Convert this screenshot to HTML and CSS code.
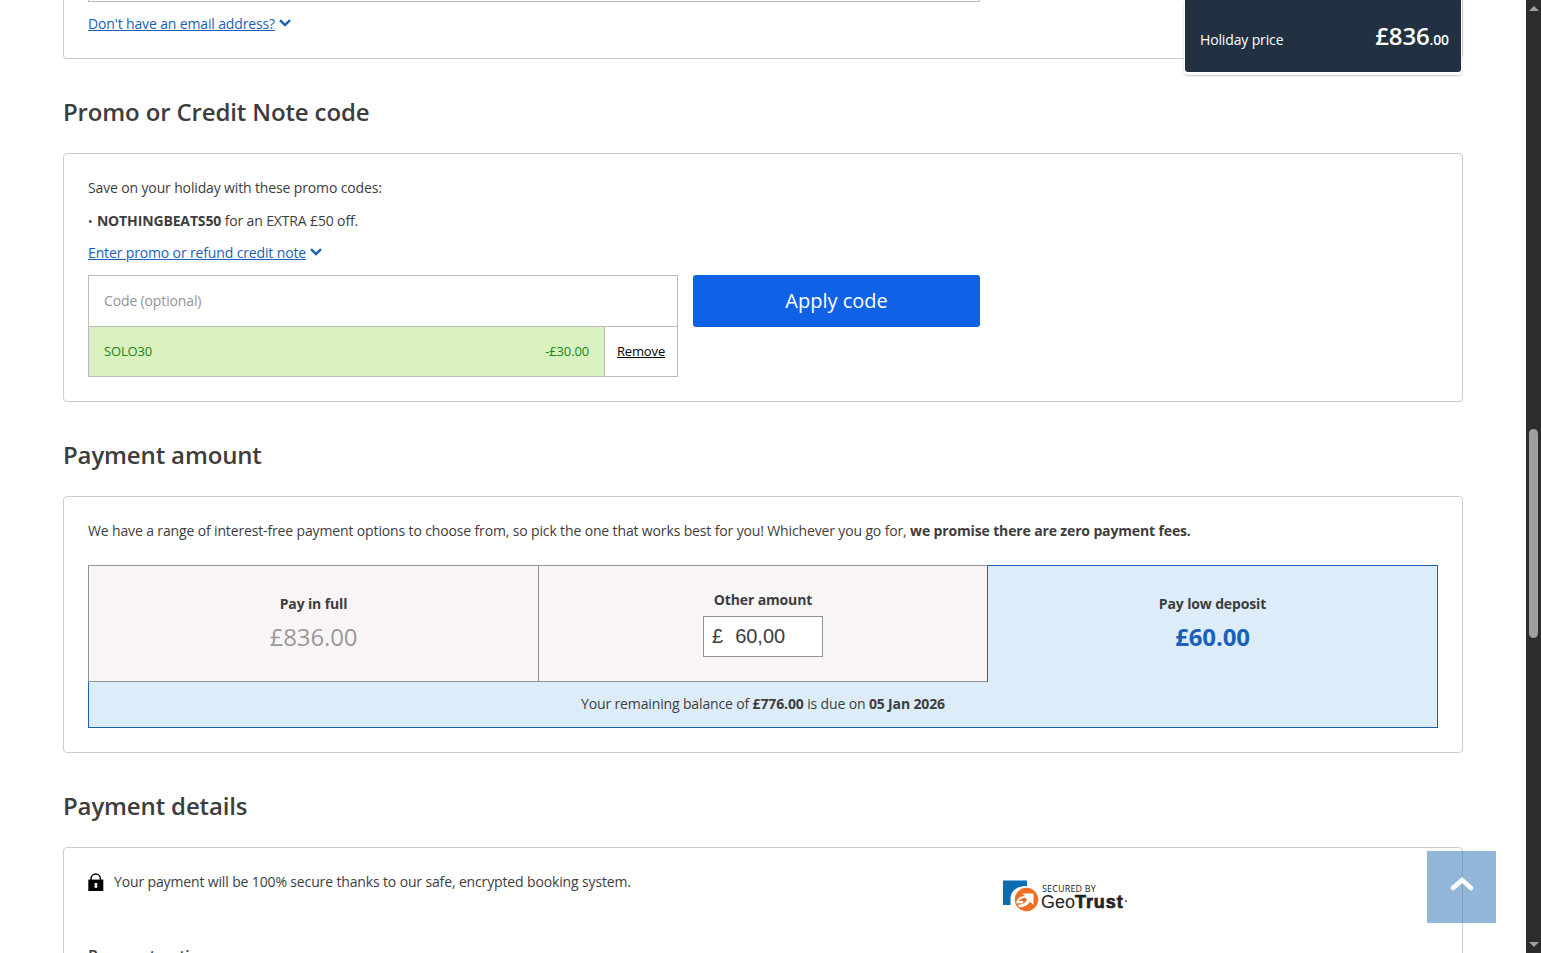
FILE: index.html
```html
<!DOCTYPE html>
<html lang="en">
<head>
  <meta charset="UTF-8">
  <meta name="viewport" content="width=device-width, initial-scale=1.0">
  <title>Payment</title>
  <link rel="stylesheet" href="styles.css">
</head>
<body>

<main class="page">
  <section class="panel panel-contact">
    <div class="email-field"></div>
    <a class="toggle-link" href="#"><span>Don't have an email address?</span><svg class="chevron" width="12" height="8" viewBox="0 0 12 8"><path d="M1 1.2 L6 6 L11 1.2"/></svg></a>
  </section>

  <h2>Promo or Credit Note code</h2>
  <section class="panel">
    <p class="promo-intro">Save on your holiday with these promo codes:</p>
    <p class="promo-item"><span class="dot">•</span> <b>NOTHINGBEATS50</b> for an EXTRA £50 off.</p>
    <a class="toggle-link" href="#"><span>Enter promo or refund credit note</span><svg class="chevron" width="12" height="8" viewBox="0 0 12 8"><path d="M1 1.2 L6 6 L11 1.2"/></svg></a>
    <div class="promo-form">
      <div class="promo-codes">
        <input class="code-input" type="text" placeholder="Code (optional)">
        <div class="applied">
          <div class="applied-code"><span>SOLO30</span><span>-£30.00</span></div>
          <a class="remove" href="#">Remove</a>
        </div>
      </div>
      <button class="apply">Apply code</button>
    </div>
  </section>

  <h2>Payment amount</h2>
  <section class="panel">
    <p class="amount-intro">We have a range of interest-free payment options to choose from, so pick the one that works best for you! Whichever you go for, <b>we promise there are zero payment fees.</b></p>
    <div class="amounts">
      <div class="options">
        <div class="option">
          <b>Pay in full</b>
          <span class="price">£836.00</span>
        </div>
        <div class="option option-other">
          <b>Other amount</b>
          <label class="other-field"><span>£</span><input type="text" value="60,00"></label>
        </div>
        <div class="option selected">
          <b>Pay low deposit</b>
          <span class="price">£60.00</span>
        </div>
      </div>
      <p class="balance">Your remaining balance of <b>£776.00</b> is due on <b>05 Jan 2026</b></p>
    </div>
  </section>

  <h2>Payment details</h2>
  <section class="panel panel-details">
    <div class="secure">
      <svg class="lock" width="16" height="18" viewBox="0 0 16 18"><path d="M3 7.5V5.8a4.7 4.7 0 0 1 9.4 0v1.7" fill="none" stroke="#000" stroke-width="1.5"/><path d="M.3 6.6h15V18H.3z"/><path d="M6.6 10h2.6v4.8H6.6z" fill="#fff"/></svg>
      <p>Your payment will be 100% secure thanks to our safe, encrypted booking system.</p>
      <div class="geotrust">
        <svg width="36" height="32" viewBox="0 0 36 32">
          <path d="M0 .5h24V6C14 5.500 7.500 11 7.500 19v6H0z" fill="#0d6bb0"/>
          <circle cx="23.500" cy="19.500" r="11.700" fill="#ee6f23"/>
          <path d="M19 13.500h11.500v11.500l-3.500-3.200c-2.300 4-6.500 6-11.500 5.200v-2.500c4 .3 6.800-1.500 8.500-5l-1.800-1.700c-2.800.3-5 1.400-6.700 3.200h4.500v2.300h-7c.8-4.500 4.200-7.300 9-7.300z" fill="#fff"/>
        </svg>
        <div class="geotrust-text">
          <span class="secured">SECURED BY</span>
          <span class="brand">Geo<b>Trust</b><i></i></span>
        </div>
      </div>
    </div>
    <h3>Payment options</h3>
  </section>
</main>

<aside class="holiday-price">
  <span>Holiday price</span>
  <span class="total">£836<small>.00</small></span>
</aside>

<a class="to-top" href="#"><svg width="24" height="16" viewBox="0 0 24 16"><path d="M3 12 L12 4 L21 12"/></svg></a>

<div class="scrollbar">
  <span class="arrow-up"></span>
  <span class="thumb"></span>
  <span class="arrow-down"></span>
</div>

</body>
</html>
```

FILE: styles.css
```css
* {
  box-sizing: border-box;
}
body {
  margin: 0;
  height: 953px;
  display: flex;
  position: relative;
  overflow: hidden;
  background: #fff;
  color: #3d3d3d;
  font: 14px/20px 'Open Sans', sans-serif;
  letter-spacing: -.14px;
}
p, h2, h3 {
  margin: 0;
}
.page {
  flex: 1;
  padding: 0 63px;
}
h2 {
  padding: 36px 0 25px;
  font-size: 24px;
  line-height: 33px;
  font-weight: 600;
  letter-spacing: -.14px;
}
.panel {
  border: 1px solid #ccc;
  border-radius: 4px;
  padding: 24px;
}
.panel-contact {
  height: 59px;
  padding-top: 0;
  border-top: none;
  border-radius: 0 0 4px 4px;
}
.email-field {
  width: 892px;
  height: 2px;
  margin-bottom: 12px;
  border: 1px solid #bbb;
  border-top: none;
}
.toggle-link {
  display: flex;
  align-items: center;
  color: #1b60b8;
  text-decoration: none;
}
.toggle-link span {
  text-decoration: underline;
}
.chevron {
  margin: 0 0 2px 4px;
  fill: none;
  stroke: #1b60b8;
  stroke-width: 2.4;
}

/* promo codes */
.promo-intro {
  margin-bottom: 13px;
}
.promo-item {
  margin-bottom: 11px;
}
.dot {
  font-size: 12px;
  margin-right: 1px;
}
.promo-form {
  display: flex;
  align-items: flex-start;
  gap: 15px;
  margin-top: 12px;
}
.promo-codes {
  width: 590px;
}
.code-input {
  display: block;
  width: 100%;
  height: 52px;
  padding: 0 15px 2px;
  border: 1px solid #bbb;
  font: inherit;
  letter-spacing: -.14px;
}
.code-input::placeholder {
  color: #949494;
}
.applied {
  display: flex;
  height: 50px;
  border: 1px solid #bbb;
  border-top: none;
  font-size: 13px;
}
.applied-code {
  flex: 1;
  display: flex;
  align-items: center;
  justify-content: space-between;
  padding: 0 15px 2px;
  background: #d9f0bf;
  border-right: 1px solid #bbb;
  color: #1b841b;
}
.remove {
  width: 72px;
  line-height: 49px;
  text-align: center;
  color: #000;
}
.apply {
  width: 287px;
  height: 52px;
  padding-bottom: 3px;
  border: none;
  border-radius: 3px;
  background: #0f62e6;
  color: #fff;
  font: 20px 'Open Sans', sans-serif;
}

/* payment amount */
.amount-intro {
  margin-bottom: 24px;
}
.amounts {
  height: 163px;
  border: 1px solid #1b60b8;
  border-top: none;
  background: #dcedf9;
}
.options {
  display: grid;
  grid-template-columns: 451px 449px 1fr;
  height: 117px;
  margin-left: -1px;
}
.option {
  display: flex;
  flex-direction: column;
  align-items: center;
  padding-top: 28px;
  background: #f9f5f6;
  border: solid #909298;
  border-width: 1px 1px 1px 0;
}
.option:first-child {
  border-left-width: 1px;
}
.option-other {
  padding-top: 24px;
  border-right-color: #1b60b8;
}
.option.selected {
  background: none;
  border: none;
  border-top: 1px solid #1b60b8;
}
.price {
  margin-top: 6px;
  font-size: 24px;
  line-height: 33px;
  color: #999;
}
.selected .price {
  color: #1b60b8;
  font-weight: 700;
}
.other-field {
  display: flex;
  align-items: center;
  width: 120px;
  height: 41px;
  margin-top: 6px;
  padding: 0 0 0 8px;
  background: #fff;
  border: 1px solid #909298;
  font: 20px 'Liberation Sans', sans-serif;
  letter-spacing: 0;
}
.other-field input {
  width: 80px;
  margin-left: 12px;
  padding: 0;
  border: none;
  font: inherit;
  color: inherit;
}
.balance {
  line-height: 44px;
  text-align: center;
}

/* payment details */
.panel-details {
  height: 150px;
}
.secure {
  display: flex;
  height: 73px;
}
.lock {
  margin: 1px 10px 0 0;
}
.secure p {
  width: 889px;
}
h3 {
  font-size: 16px;
  line-height: 22px;
  font-weight: 600;
}
.geotrust {
  display: flex;
  margin-top: 8px;
  color: #222;
}
.geotrust-text {
  display: flex;
  flex-direction: column;
  padding: 4px 0 0 3px;
}
.secured {
  font-size: 9px;
  line-height: 10px;
  letter-spacing: .15px;
}
.brand {
  display: flex;
  margin-left: -1px;
  font: 18px/16px 'Liberation Sans', sans-serif;
  letter-spacing: 0;
}
.brand b {
  letter-spacing: .9px;
  -webkit-text-stroke: .7px #222;
}
.brand i {
  width: 2px;
  height: 2px;
  margin: 6px 0 0 1px;
  background: #777;
}

.holiday-price {
  position: absolute;
  top: 0;
  left: 1185px;
  width: 276px;
  height: 72px;
  padding: 19px 12px 0 15px;
  display: flex;
  align-items: baseline;
  justify-content: space-between;
  background: #213142;
  border-radius: 0 0 3px 3px;
  box-shadow: 0 2px 0 1px #fff, 0 3px 2px 1px rgba(0,0,0,0.22);
  color: #fff;
}
.total {
  font-size: 24px;
  line-height: 34px;
  font-weight: 600;
}
.total small {
  font-size: 14px;
}
.to-top {
  position: absolute;
  left: 1427px;
  top: 851px;
  width: 69px;
  height: 72px;
  display: flex;
  align-items: center;
  justify-content: center;
  padding-bottom: 6px;
  background: rgba(58,124,186,0.55);
}
.to-top path {
  fill: none;
  stroke: #fff;
  stroke-width: 4.5;
  stroke-linecap: round;
}
.scrollbar {
  width: 15px;
  height: 953px;
  display: flex;
  flex-direction: column;
  align-items: center;
  padding: 6px 0;
  background: #2c2c2c;
}
.arrow-up, .arrow-down {
  border: solid transparent;
  border-width: 0 5px;
}
.arrow-up {
  border-bottom: 5px solid #a0a0a0;
}
.arrow-down {
  margin-top: auto;
  border-top: 5px solid #a0a0a0;
}
.thumb {
  width: 9px;
  height: 209px;
  margin-top: 418px;
  border-radius: 5px;
  background: #9f9f9f;
}
```
